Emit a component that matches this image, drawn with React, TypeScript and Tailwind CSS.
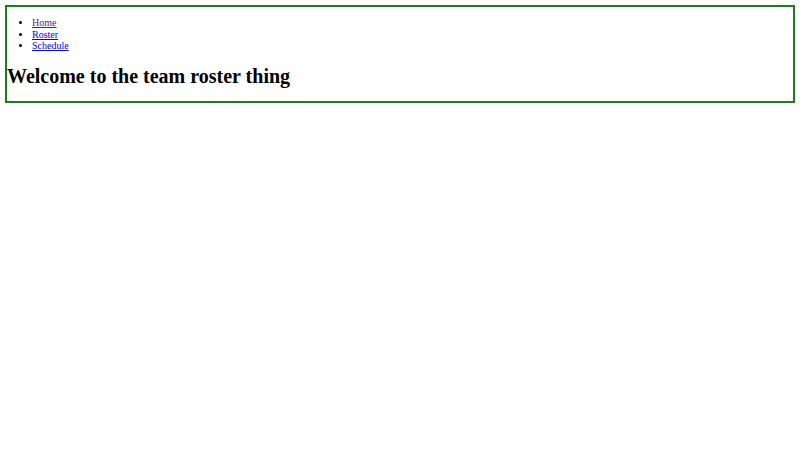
export default function App() {
  const links = [
    { label: 'Home', visited: true },
    { label: 'Roster', visited: false },
    { label: 'Schedule', visited: false },
  ];

  return (
    <div className="min-h-[450px] bg-white p-[5px] font-['Liberation_Serif',serif] text-[10px] leading-[1.15] text-black">
      <div className="border-2 border-[#1e7b1e]">
        <ul className="mt-[10px] list-disc pl-[25px]">
          {links.map((link) => (
            <li key={link.label}>
              <a
                href="#"
                className={`underline ${link.visited ? 'text-[#551a8b]' : 'text-[#0000ee]'}`}
              >
                {link.label}
              </a>
            </li>
          ))}
        </ul>
        <h1 className="my-[13px] text-[20px] font-bold leading-[1.15]">
          Welcome to the team roster thing
        </h1>
      </div>
    </div>
  );
}
